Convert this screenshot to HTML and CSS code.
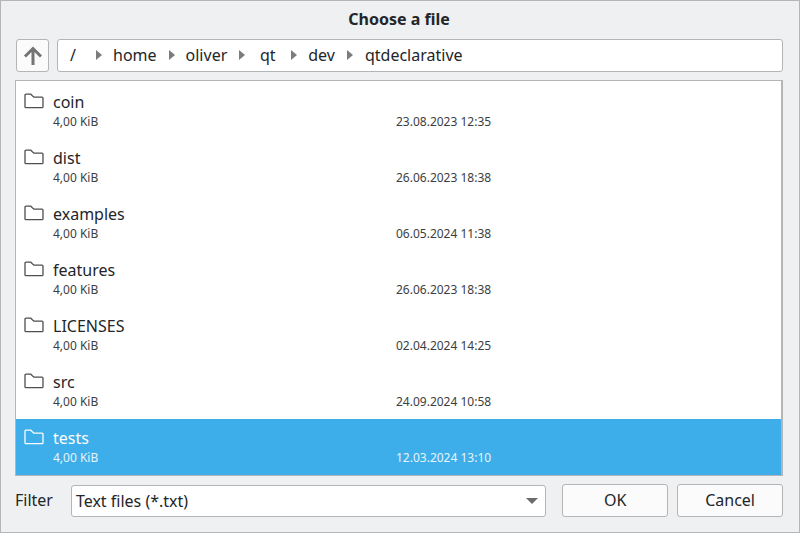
FILE: index.html
```html
<!DOCTYPE html>
<html lang="en">
<head>
<meta charset="utf-8">
<title>Choose a file</title>
<link rel="stylesheet" href="styles.css">
</head>
<body>
<svg class="defs" width="0" height="0" aria-hidden="true">
  <symbol id="folder" viewBox="0 0 20 16">
    <path d="M1 13.7V2.2c0-.6.4-1 1-1h4.8l3 3H18c.6 0 1 .4 1 1v8.5c0 .6-.4 1-1 1H2c-.6 0-1-.4-1-1z" fill="none" stroke="currentColor" stroke-width="1.3"/>
  </symbol>
</svg>
<main class="dialog">
  <h1 class="title">Choose a file</h1>
  <div class="nav">
    <button class="up" aria-label="Up">
      <svg width="20" height="20" viewBox="0 0 20 20"><path d="M10 19V3M2 10.5L10 2.5l8 8" fill="none" stroke="#737476" stroke-width="3"/></svg>
    </button>
    <div class="crumbs">
      <span class="crumb root">/</span><i class="sep"></i>
      <span class="crumb">home</span><i class="sep"></i>
      <span class="crumb">oliver</span><i class="sep"></i>
      <span class="crumb short">qt</span><i class="sep"></i>
      <span class="crumb">dev</span><i class="sep"></i>
      <span class="crumb leaf">qtdeclarative</span>
    </div>
  </div>
  <div class="list">
    <div class="row"><svg class="ico"><use href="#folder"/></svg><div class="name">coin</div><div class="size">4,00 KiB</div><div class="date">23.08.2023 12:35</div></div>
    <div class="row"><svg class="ico"><use href="#folder"/></svg><div class="name">dist</div><div class="size">4,00 KiB</div><div class="date">26.06.2023 18:38</div></div>
    <div class="row"><svg class="ico"><use href="#folder"/></svg><div class="name">examples</div><div class="size">4,00 KiB</div><div class="date">06.05.2024 11:38</div></div>
    <div class="row"><svg class="ico"><use href="#folder"/></svg><div class="name">features</div><div class="size">4,00 KiB</div><div class="date">26.06.2023 18:38</div></div>
    <div class="row"><svg class="ico"><use href="#folder"/></svg><div class="name">LICENSES</div><div class="size">4,00 KiB</div><div class="date">02.04.2024 14:25</div></div>
    <div class="row"><svg class="ico"><use href="#folder"/></svg><div class="name">src</div><div class="size">4,00 KiB</div><div class="date">24.09.2024 10:58</div></div>
    <div class="row selected"><svg class="ico"><use href="#folder"/></svg><div class="name">tests</div><div class="size">4,00 KiB</div><div class="date">12.03.2024 13:10</div></div>
  </div>
  <div class="footer">
    <span class="label">Filter</span>
    <div class="combo"><span>Text files (*.txt)</span><i class="caret"></i></div>
    <button class="btn ok">OK</button>
    <button class="btn">Cancel</button>
  </div>
</main>
</body>
</html>
```
FILE: styles.css
```css
* { box-sizing: border-box; }
html, body { margin: 0; padding: 0; }
body { width: 800px; height: 533px; overflow: hidden; font-family: "Noto Sans", sans-serif; font-size: 16px; color: #232629; }
.defs { position: absolute; }
.dialog { width: 800px; height: 533px; background: #eff0f1; border: 1px solid #b3b5b6; padding: 0 16px 0 14px; display: flex; flex-direction: column; }
.title { margin: 0; height: 38px; padding-top: 7px; font-size: 16px; line-height: 22px; font-weight: 700; text-align: center; color: #232629; }
.nav { display: flex; gap: 8px; height: 33px; padding-left: 1px; }
.up { width: 33px; height: 33px; padding: 0; background: #fbfbfb; border: 1px solid #b4b5b6; border-radius: 3px; display: flex; align-items: center; justify-content: center; }
.crumbs { flex: 1; height: 33px; background: #fff; border: 1px solid #b4b5b6; border-radius: 3px; display: flex; align-items: center; line-height: 22px; padding: 0 0 2px 12px; }
.crumb { color: #232629; }
.root { width: 12px; }
.short { min-width: 23px; text-align: center; }
.leaf { margin-left: 1px; }
.sep { width: 0; height: 0; margin: 0 11px 0 12px; border-left: 6px solid #7b7c7e; border-top: 5px solid transparent; border-bottom: 5px solid transparent; }
.root + .sep { margin-left: 14px; }
.list { margin-top: 8px; height: 396px; background: #fff; border: 1px solid #b4b5b6; border-right-width: 2px; padding-top: 2px; overflow: hidden; }
.row { position: relative; height: 56px; padding: 8px 0 0 37px; color: #232629; }
.ico { position: absolute; left: 8px; top: 10px; width: 20px; height: 16px; color: #4d4f51; }
.name { font-size: 16px; line-height: 22px; height: 22px; }
.size { font-size: 12px; line-height: 16px; height: 16px; margin-top: 1px; color: #3b3e41; }
.date { position: absolute; left: 380px; top: 31px; font-size: 12px; line-height: 16px; color: #3b3e41; }
.selected { background: #3daee9; color: #fcfcfc; }
.selected .ico { color: #fcfcfc; }
.selected .size, .selected .date { color: #e6f4fb; }
.footer { display: flex; align-items: center; height: 33px; margin-top: 8px; }
.label { width: 56px; padding: 0 0 2px; color: #232629; }
.combo { width: 476px; height: 32px; margin-top: 1px; background: #fff; border: 1px solid #b4b5b6; border-radius: 3px; display: flex; align-items: center; justify-content: space-between; padding: 0 7px 0 4px; }
.caret { width: 0; height: 0; border-top: 6px solid #6a6c6e; border-left: 6px solid transparent; border-right: 6px solid transparent; }
.btn { width: 106px; height: 33px; margin: 0; padding: 0 0 1px; background: #fbfbfb; border: 1px solid #b4b5b6; border-radius: 3px; font: inherit; color: #232629; }
.ok { margin-left: 16px; margin-right: 9px; }
```
